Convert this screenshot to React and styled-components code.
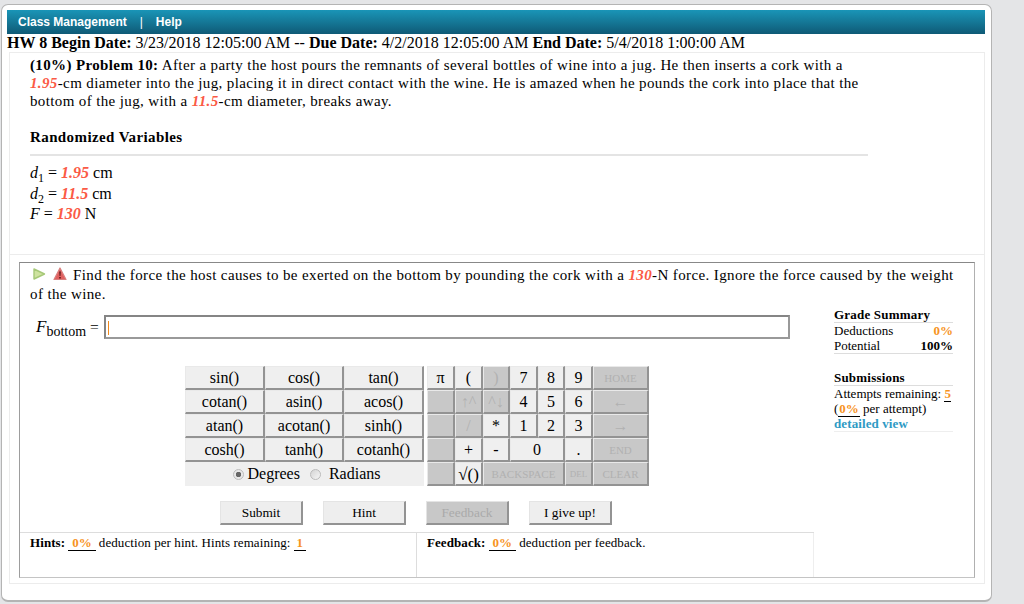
import React from 'react';
import styled, { createGlobalStyle } from 'styled-components';

const GlobalStyle = createGlobalStyle`
  html, body {
    margin: 0;
    padding: 0;
    background: #e4e5e7;
    font-family: "Liberation Serif", "Times New Roman", serif;
    color: #000;
  }
`;

const Page = styled.div`
  width: 1024px;
  height: 604px;
  padding: 4px 32px 0 1px;
  box-sizing: border-box;
  overflow: hidden;
`;

const Shell = styled.div`
  height: 598px;
  box-sizing: border-box;
  padding: 5px 5px 0 5px;
  background: #fff;
  border: 1px solid #b4b4b4;
  border-radius: 7px;
  border-bottom-width: 2px;
`;

const TopBar = styled.div`
  height: 24px;
  box-sizing: border-box;
  padding-left: 11px;
  margin-right: 1px;
  display: flex;
  align-items: center;
  background: linear-gradient(#1a95b7, #0f5a76);
  color: #fff;
  font: bold 12px/24px "Liberation Sans", Arial, sans-serif;
`;

const TopSep = styled.span`
  margin: 0 13px;
  font-weight: normal;
`;

const DateLine = styled.div`
  font-size: 16px;
  line-height: 18px;
  white-space: nowrap;
`;

const Panel = styled.div`
  margin: 0 1px 0 2px;
  height: 532px;
  box-sizing: border-box;
  border: 1px solid #ececec;
`;

const ProblemArea = styled.div`
  height: 202px;
  box-sizing: border-box;
  padding: 3px 20px 0 20px;
  border-bottom: 1px solid #ececec;
`;

const Paragraph = styled.div`
  width: 836px;
  font-size: 15px;
  letter-spacing: 0.37px;
  line-height: 18px;
`;

const Rnd = styled.b`
  color: #fb5a45;
  font-style: italic;
`;

const SectionTitle = styled.div`
  margin-top: 18px;
  width: 838px;
  padding-bottom: 8px;
  border-bottom: 2px solid #e4e4e4;
  font-size: 15px;
  letter-spacing: 0.4px;
  font-weight: bold;
  line-height: 18px;
`;

const VarList = styled.div`
  margin-top: 7px;
  font-size: 16px;
`;

const VarRow = styled.div`
  height: 20.5px;
  line-height: 20.5px;
  white-space: nowrap;
`;

const MathVar = styled.i`
  font-size: 16px;
  sub {
    font-style: normal;
    font-size: 12px;
    line-height: 0;
  }
`;

const QuestionBox = styled.div`
  margin: 7px 9px 0 9px;
  height: 316px;
  box-sizing: border-box;
  border: 1px solid #9d9d9d;
  border-top-color: #888;
  border-bottom-color: #c4c4c4;
  border-right-color: #b0b0b0;
`;

const Prompt = styled.div`
  box-sizing: border-box;
  padding: 3px 10px 0 10px;
  font-size: 15px;
  letter-spacing: 0.38px;
  line-height: 19px;
  height: 41px;
`;

const PromptIcon = styled.svg`
  width: 14px;
  height: 14px;
  vertical-align: -1px;
  margin: 0 ${p => p.$after || 5}px 0 2px;
`;

const Body = styled.div`
  display: flex;
`;

const MainCol = styled.div`
  width: 814px;
`;

const AnswerRow = styled.div`
  display: flex;
  align-items: center;
  height: 24px;
  margin-top: 11px;
  padding-left: 16px;
`;

const AnswerLabel = styled.div`
  width: 68px;
  font-size: 15.5px;
  white-space: nowrap;
  i {
    font-size: 17px;
  }
  sub {
    font-size: 14px;
    line-height: 0;
  }
`;

const AnswerInput = styled.div`
  width: 686px;
  height: 24px;
  box-sizing: border-box;
  border: 2px solid #858585;
  border-right-color: #999;
  border-bottom-color: #999;
  padding: 4px 0 0 2px;
`;

const Caret = styled.div`
  width: 1px;
  height: 14px;
  background: #f28a1c;
`;

const Keypad = styled.div`
  display: flex;
  gap: 3px;
  margin: 27px 0 0 165px;
`;

const FnBlock = styled.div`
  display: grid;
  grid-template-columns: 80px 79px 80px;
  grid-auto-rows: 24px;
  background: #efefef;
`;

const NumBlock = styled.div`
  display: grid;
  grid-template-columns: 28px 28px 27px 28px 27px 28px 56px;
  grid-auto-rows: 24px;
`;

const Key = styled.div`
  display: flex;
  align-items: center;
  justify-content: center;
  box-sizing: border-box;
  grid-column: span ${p => p.$span || 1};
  padding-top: 1px;
  background: ${p => (p.$off ? '#c8c8c8' : '#efefef')};
  color: ${p => (p.$off ? '#b1b1b1' : '#000')};
  border: 1px solid #e9e9e9;
  border-right: 2px solid #939393;
  border-bottom: 2px solid #939393;
  font-size: ${p => p.$size || 15}px;
  line-height: 1;
  white-space: nowrap;
  overflow: hidden;
`;

const AngleRow = styled.div`
  grid-column: span 3;
  display: flex;
  align-items: center;
  justify-content: center;
  padding-left: 4px;
  font-size: 16px;
`;

const Radio = styled.span`
  display: inline-block;
  width: 11px;
  height: 11px;
  box-sizing: border-box;
  margin: 0 ${p => p.$after || 4}px 0 ${p => p.$gap || 0}px;
  border-radius: 50%;
  border: 1px solid #bbb;
  background: ${p => (p.$on ? 'radial-gradient(circle, #666 0 2.5px, #e8e8e8 3px)' : 'linear-gradient(135deg, #d4d4d4, #f6f6f6)')};
`;

const ActionRow = styled.div`
  display: flex;
  gap: 20px;
  margin: 15px 0 0 200px;
`;

const ActionButton = styled.div`
  width: 83px;
  height: 24px;
  box-sizing: border-box;
  display: flex;
  align-items: center;
  justify-content: center;
  padding-top: 1px;
  background: ${p => (p.$off ? '#c8c8c8' : '#eeeeee')};
  color: ${p => (p.$off ? '#aaa' : '#000')};
  border: 1px solid #e4e4e4;
  border-right: 2px solid #939393;
  border-bottom: 2px solid #939393;
  font-size: 13.33px;
`;

const FootRow = styled.div`
  display: flex;
  box-sizing: border-box;
  margin-top: 7px;
  height: 45px;
  width: 794px;
  border-top: 1px solid #ddd;
`;

const FootCell = styled.div`
  flex: 1;
  box-sizing: border-box;
  padding: 2px 0 0 10px;
  font-size: 13px;
  letter-spacing: 0.08px;
  line-height: 16px;
  white-space: nowrap;
  border-left: ${p => (p.$divider ? '1px solid #ddd' : 'none')};
  border-right: ${p => (p.$divider ? '1px solid #eee' : 'none')};
`;

const Blank = styled.span`
  display: inline-block;
  margin: 0 3px;
  padding: 0 ${p => p.$pad ?? 4}px;
  border-bottom: 1px solid #000;
  color: #f7931e;
  font-weight: bold;
  line-height: 14px;
`;

const SideCol = styled.div`
  width: 119px;
  margin: 3px 0 0 0;
  font-size: 13px;
  line-height: 15px;
`;

const SideTitle = styled.div`
  font-weight: bold;
  letter-spacing: 0.2px;
  border-bottom: 1px solid #ddd;
  height: 15px;
  margin-top: ${p => p.$top || 0}px;
`;

const SideRow = styled.div`
  display: flex;
  justify-content: space-between;
  line-height: 15px;
  ${p => p.$last && 'border-bottom: 1px solid #ddd;'}
`;

const Orange = styled.b`
  color: #f7931e;
`;

const SideNote = styled.div`
  white-space: nowrap;
  line-height: 15px;
`;

const SideLink = styled.div`
  color: #2e9ac4;
  font-weight: bold;
  letter-spacing: 0.1px;
  border-bottom: 1px solid #eee;
`;

const SideBlank = styled.span`
  color: #f7931e;
  font-weight: bold;
  border-bottom: 1px solid #000;
  ${p => p.$wide && 'padding-right: 1px; padding-left: 1px;'}
`;

const fnKeys = ['sin()', 'cos()', 'tan()', 'cotan()', 'asin()', 'acos()', 'atan()', 'acotan()', 'sinh()', 'cosh()', 'tanh()', 'cotanh()'];

const numKeys = [
  { t: 'π' }, { t: '(' }, { t: ')', off: true }, { t: '7' }, { t: '8' }, { t: '9' }, { t: 'HOME', off: true, size: 11 },
  { t: '', off: true }, { t: '↑^', off: true }, { t: '^↓', off: true }, { t: '4' }, { t: '5' }, { t: '6' }, { t: '←', off: true },
  { t: '', off: true }, { t: '/', off: true }, { t: '*' }, { t: '1' }, { t: '2' }, { t: '3' }, { t: '→', off: true },
  { t: '', off: true }, { t: '+' }, { t: '-' }, { t: '0', span: 2 }, { t: '.' }, { t: 'END', off: true, size: 11 },
  { t: '', off: true }, { t: '√()', size: 17 }, { t: 'BACKSPACE', off: true, span: 3, size: 11 }, { t: 'DEL', off: true, size: 9 }, { t: 'CLEAR', off: true, size: 11 },
];

const App = () => (
  <Page>
    <GlobalStyle />
    <Shell>
      <TopBar>Class Management<TopSep>|</TopSep>Help</TopBar>
      <DateLine>
        <b>HW 8 Begin Date:</b> 3/23/2018 12:05:00 AM -- <b>Due Date:</b> 4/2/2018 12:05:00 AM <b>End Date:</b> 5/4/2018 1:00:00 AM
      </DateLine>
      <Panel>
        <ProblemArea>
          <Paragraph>
            <b>(10%) Problem 10:</b> After a party the host pours the remnants of several bottles of wine into a jug. He then inserts a cork with a <Rnd>1.95</Rnd>-cm diameter into the jug, placing it in direct contact with the wine. He is amazed when he pounds the cork into place that the bottom of the jug, with a <Rnd>11.5</Rnd>-cm diameter, breaks away.
          </Paragraph>
          <SectionTitle>Randomized Variables</SectionTitle>
          <VarList>
            <VarRow><MathVar>d<sub>1</sub></MathVar> = <Rnd>1.95</Rnd> cm</VarRow>
            <VarRow><MathVar>d<sub>2</sub></MathVar> = <Rnd>11.5</Rnd> cm</VarRow>
            <VarRow><MathVar>F</MathVar> = <Rnd>130</Rnd> N</VarRow>
          </VarList>
        </ProblemArea>
        <QuestionBox>
          <Prompt>
            <PromptIcon viewBox="0 0 14 14">
              <path d="M2 2 L12.5 7 L2 12 Z" fill="#cfe3a0" stroke="#a6c878" strokeWidth="1.4" strokeLinejoin="round" />
            </PromptIcon>
            <PromptIcon viewBox="0 0 14 14" $after={6}>
              <path d="M7 1 L13 12.5 L1 12.5 Z" fill="#e0605f" stroke="#d9807f" strokeWidth="1.2" strokeLinejoin="round" />
              <path d="M6.3 4.5 H7.7 L7.4 9 H6.6 Z M6.3 10 H7.7 V11.4 H6.3 Z" fill="#4a1010" />
            </PromptIcon>
            Find the force the host causes to be exerted on the bottom by pounding the cork with a <Rnd>130</Rnd>-N force. Ignore the force caused by the weight of the wine.
          </Prompt>
          <Body>
            <MainCol>
              <AnswerRow>
                <AnswerLabel><i>F</i><sub>bottom</sub> =</AnswerLabel>
                <AnswerInput><Caret /></AnswerInput>
              </AnswerRow>
              <Keypad>
                <FnBlock>
                  {fnKeys.map(k => <Key key={k} $size={16}>{k}</Key>)}
                  <AngleRow>
                    <Radio $on />Degrees<Radio $gap={10} $after={8} />Radians
                  </AngleRow>
                </FnBlock>
                <NumBlock>
                  {numKeys.map((k, i) => (
                    <Key key={i} $off={k.off} $span={k.span} $size={k.size || 16}>{k.t}</Key>
                  ))}
                </NumBlock>
              </Keypad>
              <ActionRow>
                <ActionButton>Submit</ActionButton>
                <ActionButton>Hint</ActionButton>
                <ActionButton $off>Feedback</ActionButton>
                <ActionButton>I give up!</ActionButton>
              </ActionRow>
              <FootRow>
                <FootCell>
                  <b>Hints:</b><Blank>0%</Blank>deduction per hint. Hints remaining:<Blank $pad={3}>1</Blank>
                </FootCell>
                <FootCell $divider>
                  <b>Feedback:</b><Blank>0%</Blank>deduction per feedback.
                </FootCell>
              </FootRow>
            </MainCol>
            <SideCol>
              <SideTitle>Grade Summary</SideTitle>
              <SideRow>Deductions<Orange>0%</Orange></SideRow>
              <SideRow $last>Potential<b>100%</b></SideRow>
              <SideTitle $top={16}>Submissions</SideTitle>
              <SideNote>Attempts remaining: <SideBlank>5</SideBlank></SideNote>
              <SideNote>(<SideBlank $wide>0%</SideBlank> per attempt)</SideNote>
              <SideLink>detailed view</SideLink>
            </SideCol>
          </Body>
        </QuestionBox>
      </Panel>
    </Shell>
  </Page>
);

export default App;
